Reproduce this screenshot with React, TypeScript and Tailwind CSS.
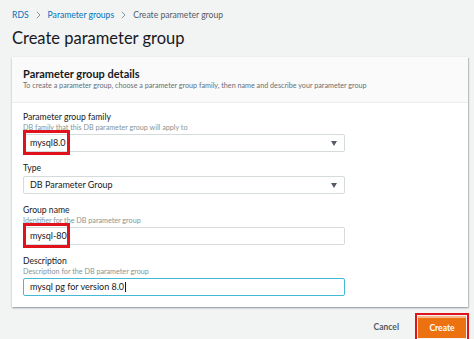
const font = { fontFamily: 'Lato, "Open Sans", sans-serif' }

function Caret() {
  return (
    <svg width="6" height="5" viewBox="0 0 6 5" className="shrink-0">
      <path d="M0 0h6L3 5z" fill="#545b64" />
    </svg>
  )
}

function Chevron() {
  return (
    <svg width="5" height="8" viewBox="0 0 5 8" className="shrink-0">
      <path d="M0.8 0.8L4 4L0.8 7.2" fill="none" stroke="#879596" strokeWidth="1" />
    </svg>
  )
}

function Field({ label, hint, value, select, focused, marked }: {
  label: string
  hint?: string
  value: string
  select?: boolean
  focused?: boolean
  marked?: boolean
}) {
  return (
    <div>
      <div className="text-[8.6px] leading-[12px] text-[#16191f]">{label}</div>
      {hint && <div className="text-[7.2px] leading-[9px] text-[#879596]">{hint}</div>}
      <div
        className={`relative mt-[2px] w-[322px] h-[18px] flex items-center justify-between pl-[6px] pr-[7px] rounded-[2px] bg-white ${
          focused ? 'border-[1.5px] border-[#44b9d6]' : 'border border-[#d5dbdb]'
        }`}
      >
        <span className="text-[9px] text-[#16191f] flex items-center">
          {value}
          {focused && <span className="w-px h-[10px] bg-[#16191f] ml-px"></span>}
        </span>
        {select && <Caret />}
        {marked && (
          <div className="absolute left-[-1px] top-[-5px] w-[47px] h-[25px] border-[3px] border-[#e0121b]"></div>
        )}
      </div>
    </div>
  )
}

export default function App() {
  return (
    <div style={font} className="w-[474px] h-[339px] overflow-hidden bg-[#f2f3f3] pl-[12px] pr-[6px]">
      <div className="flex items-center gap-[7px] pt-[8px] text-[8.6px] leading-[14px]">
        <span className="text-[#0073bb]">RDS</span>
        <Chevron />
        <span className="text-[#0073bb]">Parameter groups</span>
        <Chevron />
        <span className="text-[#545b64]">Create parameter group</span>
      </div>
      <h1 className="mt-[5px] text-[16.5px] leading-[22px] text-[#16191f]">Create parameter group</h1>

      <div className="mt-[8px] bg-white shadow-[0_1px_2px_rgba(0,28,36,0.3),1px_1px_1px_rgba(0,28,36,0.15)]">
        <div className="bg-[#fafafa] border-b border-[#eaeded] px-[11px] pt-[10px] pb-[11px]">
          <div className="text-[11px] leading-[14px] font-bold text-[#16191f]">Parameter group details</div>
          <div className="text-[7.2px] leading-[10px] text-[#687078]">
            To create a parameter group, choose a parameter group family, then name and describe your parameter group
          </div>
        </div>
        <div className="px-[11px] pt-[8px] pb-[11px] flex flex-col gap-[10px]">
          <Field
            label="Parameter group family"
            hint="DB family that this DB parameter group will apply to"
            value="mysql8.0"
            select
            marked
          />
          <Field label="Type" value="DB Parameter Group" select />
          <Field
            label="Group name"
            hint="Identifier for the DB parameter group"
            value="mysql-80"
            marked
          />
          <Field
            label="Description"
            hint="Description for the DB parameter group"
            value="mysql pg for version 8.0"
            focused
          />
        </div>
      </div>

      <div className="flex items-center justify-end gap-[16px] mt-[6px] mr-[-1px]">
        <button className="text-[8.5px] leading-[12px] font-bold text-[#545b64]">Cancel</button>
        <div className="border-[2px] border-[#e0121b] p-px">
          <button className="flex items-center justify-center w-[48px] h-[22px] bg-[#ec7211] border-t-[2px] border-[#f7b58a] text-[8.5px] font-bold text-white">
            Create
          </button>
        </div>
      </div>
    </div>
  )
}
